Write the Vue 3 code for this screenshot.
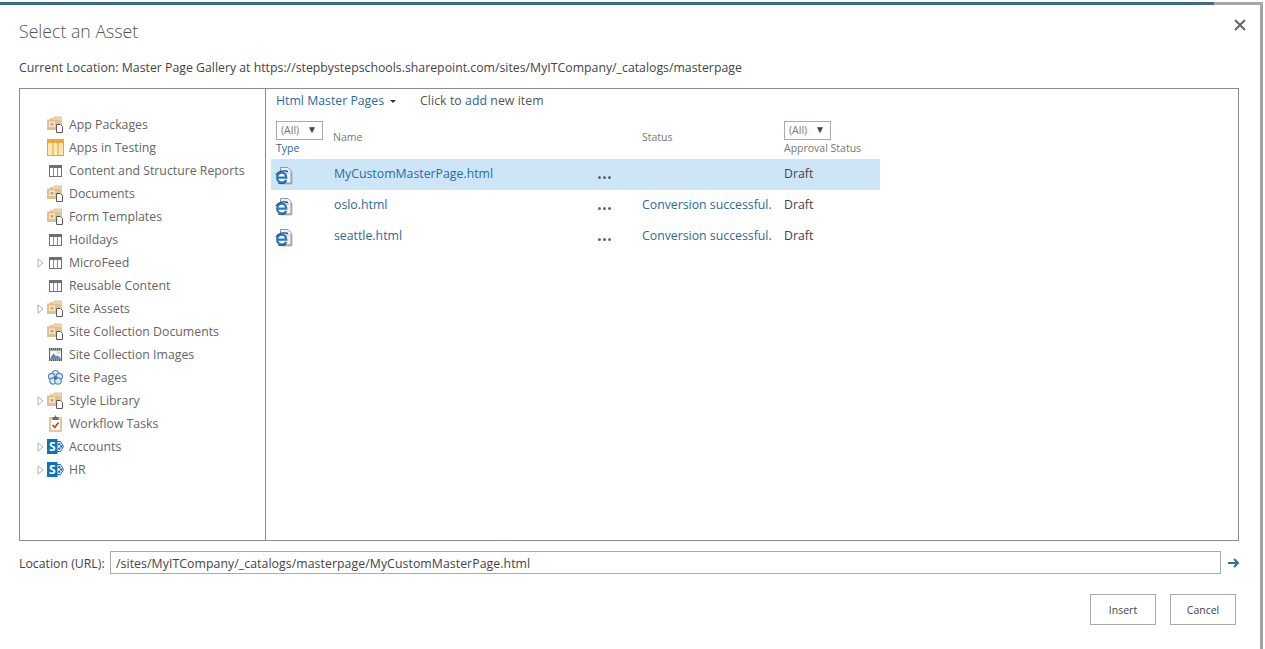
<script setup>
const libraries = [
  { name: 'App Packages', icon: 'folder' },
  { name: 'Apps in Testing', icon: 'orange' },
  { name: 'Content and Structure Reports', icon: 'list' },
  { name: 'Documents', icon: 'folder' },
  { name: 'Form Templates', icon: 'folder' },
  { name: 'Hoildays', icon: 'list' },
  { name: 'MicroFeed', icon: 'list', arrow: true },
  { name: 'Reusable Content', icon: 'list' },
  { name: 'Site Assets', icon: 'folder', arrow: true },
  { name: 'Site Collection Documents', icon: 'folder' },
  { name: 'Site Collection Images', icon: 'image' },
  { name: 'Site Pages', icon: 'pages' },
  { name: 'Style Library', icon: 'folder', arrow: true },
  { name: 'Workflow Tasks', icon: 'tasks' },
  { name: 'Accounts', icon: 'site', arrow: true },
  { name: 'HR', icon: 'site', arrow: true }
]

const files = [
  { name: 'MyCustomMasterPage.html', status: '', selected: true },
  { name: 'oslo.html', status: 'Conversion successful.' },
  { name: 'seattle.html', status: 'Conversion successful.' }
]
</script>

<template>
  <div class="page">
    <div class="topbar"><div class="topbar-blue"></div></div>
    <div class="dialog">
      <div class="title-row">
        <h1>Select an Asset</h1>
        <svg class="close" width="12" height="12" viewBox="0 0 12 12">
          <path d="M1 1 L11 11 M11 1 L1 11" stroke="#666" stroke-width="2" />
        </svg>
      </div>
      <p class="current">Current Location: Master Page Gallery at https://stepbystepschools.sharepoint.com/sites/MyITCompany/_catalogs/masterpage</p>

      <div class="panel">
        <ul class="tree">
          <li v-for="lib in libraries" :key="lib.name">
            <span class="arrow">
              <svg v-if="lib.arrow" width="7" height="10" viewBox="0 0 7 10">
                <path d="M1 .8 L6 5 L1 9.2 Z" fill="#fff" stroke="#b0b0b0" />
              </svg>
            </span>
            <svg class="tree-icon" width="17" height="17" viewBox="0 0 17 17">
              <template v-if="lib.icon === 'folder'">
                <path d="M3 2 H6 L7 0.5 H15 V9 H3 Z" fill="#e6c899" />
                <path d="M6 2.5 H14 V3.5 H6 Z" fill="#fbf3e4" />
                <path d="M0 3.5 H13 V14 H0 Z" fill="#e3bf8a" />
                <path d="M2 5.5 H8 V11 H2 Z" fill="#f6e6cc" />
                <path d="M3.5 7 H6.5 V9.5 H3.5 Z" fill="#c9a56f" />
                <path d="M9.5 8.5 H13.5 L15.5 10.5 V16.5 H9.5 Z" fill="#fff" stroke="#5a5a5a" />
              </template>
              <template v-else-if="lib.icon === 'orange'">
                <rect x=".5" y=".5" width="16" height="16" fill="#fde9ad" stroke="#e8a33d" />
                <rect x="0" y="0" width="17" height="4" fill="#eda63a" />
                <path d="M6 4 V16 M11 4 V16" stroke="#e8a33d" />
              </template>
              <template v-else-if="lib.icon === 'list'">
                <rect x="2.5" y="3.5" width="12" height="11" fill="#fff" stroke="#707070" />
                <rect x="2" y="3" width="13" height="3" fill="#707070" />
                <path d="M6.5 6 V14 M10.5 6 V14" stroke="#909090" />
              </template>
              <template v-else-if="lib.icon === 'image'">
                <rect x="2" y="2" width="13" height="13" fill="#5f5f5f" />
                <path d="M3 3 H14 M3 14 H14" stroke="#e8e8e8" stroke-dasharray="1 1" />
                <rect x="3" y="4.5" width="11" height="8" fill="#f2f4f7" />
                <path d="M3 12.5 L6.5 7.5 L9 10.5 L10.5 9.5 L14 12.5 Z" fill="#5b84b1" />
                <rect x="10.5" y="5.5" width="2" height="2" fill="#e6bf80" />
              </template>
              <template v-else-if="lib.icon === 'pages'">
                <g fill="#dbe7f3" stroke="#5b8ab8" stroke-width="1.2">
                  <circle cx="8.5" cy="4.7" r="3.2" />
                  <circle cx="4.7" cy="7.5" r="3.2" />
                  <circle cx="12.3" cy="7.5" r="3.2" />
                  <circle cx="6" cy="12" r="3.2" />
                  <circle cx="11" cy="12" r="3.2" />
                </g>
                <circle cx="8.5" cy="8.8" r="2" fill="#3f74a8" />
              </template>
              <template v-else-if="lib.icon === 'tasks'">
                <rect x="2" y="2" width="13" height="15" fill="#e6c695" />
                <rect x="4" y="5" width="9" height="10" fill="#fff" />
                <path d="M5.5 2 H7.5 L8.5 0 L9.5 2 H11.5 V5 H5.5 Z" fill="#6a6a6a" />
                <path d="M5.5 10 L7.7 12.5 L11.5 7.5" fill="none" stroke="#b5432e" stroke-width="1.6" />
              </template>
              <template v-else>
                <path d="M9 3.5 H13.5 L16.5 8.5 L13.5 13.5 H9 Z" fill="#fff" stroke="#0f72ba" />
                <circle cx="12.2" cy="6.3" r="1.2" fill="#0f72ba" />
                <circle cx="14.3" cy="8.5" r="1.2" fill="#0f72ba" />
                <circle cx="12.2" cy="10.7" r="1.2" fill="#0f72ba" />
                <rect x="0" y="1" width="10.5" height="15" fill="#0f72ba" />
                <text x="5.2" y="12.7" text-anchor="middle" class="sp-letter">S</text>
              </template>
            </svg>
            <span class="tree-label">{{ lib.name }}</span>
          </li>
        </ul>

        <div class="content">
          <div class="toolbar">
            <span class="view-name">Html Master Pages</span>
            <span class="caret"></span>
            <span class="add-text">Click to <span class="blue">add</span> new item</span>
          </div>

          <div class="grid">
            <div class="grid-head">
              <div class="filter-col">
                <div class="filter">(All)<span class="filter-arrow">▼</span></div>
                <span class="type-label">Type</span>
              </div>
              <span class="head-text">Name</span>
              <span></span>
              <span class="head-text">Status</span>
              <div class="filter-col">
                <div class="filter">(All)<span class="filter-arrow">▼</span></div>
                <span class="approval-label">Approval Status</span>
              </div>
            </div>

            <div v-for="file in files" :key="file.name" class="grid-row" :class="{ selected: file.selected }">
              <svg class="file-icon" width="18" height="18" viewBox="0 0 18 18">
                <path d="M5.5 .5 H13 L16 3.5 V16 H5.5 Z" fill="#eef2f6" stroke="#8299ae" />
                <path d="M7 16.8 H16.8 V5" fill="none" stroke="#8d99a5" />
                <path d="M8 3.5 H13 M10 6 H14" stroke="#b2c2d0" />
                <path d="M2.2 10.6 H11.2 C11.2 7.5 9.4 5.6 6.8 5.6 C4 5.6 2.2 7.8 2.2 10.6 C2.2 13.6 4.2 15.6 7 15.6 C9 15.6 10.4 14.6 11.2 13" fill="#fff" stroke="#2a78c0" stroke-width="2.3" />
                <path d="M.8 8 C3.5 4 9 2.8 13 4.8" fill="none" stroke="#1d4f85" stroke-width="1.2" />
                <path d="M3 16 C6 17.2 9 16.6 11 15" fill="none" stroke="#1d4f85" stroke-width="1" />
              </svg>
              <span class="file-name">{{ file.name }}</span>
              <span class="dots"><i></i><i></i><i></i></span>
              <span class="blue">{{ file.status }}</span>
              <span class="draft">Draft</span>
            </div>
          </div>
        </div>
      </div>

      <div class="location">
        <label>Location (URL):</label>
        <div class="url">/sites/MyITCompany/_catalogs/masterpage/MyCustomMasterPage.html</div>
        <svg class="go" width="12" height="10" viewBox="0 0 12 10">
          <path d="M0 5 H9 M6 1 L10 5 L6 9" fill="none" stroke="#2f6ea8" stroke-width="2" />
        </svg>
      </div>

      <div class="buttons">
        <button>Insert</button>
        <button>Cancel</button>
      </div>
    </div>
  </div>
</template>

<style>
body {
  background: #fff;
}
</style>

<style scoped>
.page {
  width: 1265px;
  height: 649px;
  box-sizing: border-box;
  padding-top: 2px;
  overflow: hidden;
  font-family: "Open Sans", "Liberation Sans", sans-serif;
  font-size: 12.3px;
  color: #444;
  background: #fff;
}
.topbar {
  height: 3px;
  width: 1263px;
  background: #a8a8a8;
}
.topbar-blue {
  width: 1214px;
  height: 3px;
  background: #3d6b8e;
}
.dialog {
  width: 1263px;
  height: 644px;
  box-sizing: border-box;
  border-right: 3px solid #a3a3a3;
  padding: 0 0 0 19px;
}
.title-row {
  display: flex;
  justify-content: space-between;
  height: 50px;
  padding: 13px 14px 0 0;
  box-sizing: border-box;
}
h1 {
  margin: 0;
  font-size: 17.7px;
  font-weight: 300;
  line-height: 27px;
  color: #555;
}
.close {
  margin-top: 1px;
}
.current {
  margin: 0;
  height: 33px;
  line-height: 26px;
  color: #444;
}
.panel {
  display: flex;
  width: 1220px;
  height: 453px;
  box-sizing: border-box;
  border: 1px solid #8c8c8c;
}
.tree {
  list-style: none;
  margin: 0;
  padding: 24px 0 0 17px;
  width: 246px;
  flex: none;
  box-sizing: border-box;
  border-right: 1px solid #8c8c8c;
}
.tree li {
  display: flex;
  align-items: center;
  height: 23px;
}
.arrow {
  width: 10px;
  flex: none;
  display: flex;
}
.tree-icon {
  flex: none;
  margin-right: 5px;
}
.tree-label {
  color: #666;
}
.sp-letter {
  font-size: 12px;
  font-weight: 700;
  fill: #fff;
  font-family: "Open Sans", sans-serif;
}
.content {
  flex: 1;
  padding-left: 5px;
}
.toolbar {
  display: flex;
  align-items: center;
  height: 22px;
  padding-left: 5px;
}
.view-name {
  color: #2b6a9e;
}
.caret {
  margin: 2px 0 0 6px;
  border: 3px solid transparent;
  border-top: 3px solid #333;
  border-bottom: 0;
}
.add-text {
  margin-left: 24px;
  color: #555;
  letter-spacing: 0.05px;
}
.blue {
  color: #2b6a9e;
}
.grid {
  width: 609px;
}
.grid-head,
.grid-row {
  display: grid;
  grid-template-columns: 63px 263px 45px 142px 96px;
}
.grid-head {
  height: 48px;
  box-sizing: border-box;
  padding-top: 10px;
  font-size: 10.5px;
}
.head-text {
  padding-top: 9px;
  color: #777;
  margin-left: -1px;
}
.grid-head .head-text + span + .head-text {
  margin-left: 0;
}
.filter-col {
  display: flex;
  flex-direction: column;
  align-items: flex-start;
}
.grid-head .filter-col:first-child {
  padding-left: 5px;
}
.filter {
  width: 47px;
  height: 19px;
  box-sizing: border-box;
  border: 1px solid #ababab;
  padding-left: 4px;
  line-height: 17px;
  color: #777;
  position: relative;
}
.filter-arrow {
  position: absolute;
  right: 5px;
  top: -1px;
  font-size: 10px;
  color: #444;
}
.type-label {
  color: #2b6a9e;
  line-height: 14px;
  margin-top: 1px;
}
.approval-label {
  color: #777;
  line-height: 14px;
  margin-top: 1px;
}
.grid-row {
  height: 31px;
  align-items: center;
  color: #444;
}
.grid-row > span {
  margin-top: -2px;
}
.grid-row.selected {
  background: #cde6f7;
}
.file-icon {
  margin-left: 4px;
  margin-top: 2px;
}
.file-name {
  color: #2b6a9e;
}
.grid-row > .dots {
  display: flex;
  gap: 2px;
  margin-top: 6px;
  margin-left: 1px;
}
.dots i {
  width: 3px;
  height: 3px;
  border-radius: 50%;
  background: #666;
}
.location {
  display: flex;
  align-items: center;
  height: 23px;
  margin-top: 10px;
}
.location label {
  width: 91px;
  flex: none;
  color: #444;
  padding-top: 1px;
}
.url {
  width: 1111px;
  height: 23px;
  flex: none;
  box-sizing: border-box;
  border: 1px solid #ababab;
  padding-left: 5px;
  line-height: 23px;
  color: #444;
  letter-spacing: 0.06px;
}
.go {
  margin-left: 7px;
}
.buttons {
  display: flex;
  justify-content: flex-end;
  gap: 14px;
  margin-top: 20px;
  padding-right: 24px;
}
button {
  width: 66px;
  height: 31px;
  border: 1px solid #ababab;
  background: #fff;
  font-family: inherit;
  font-size: 10.5px;
  color: #444;
  padding: 0;
}
</style>
